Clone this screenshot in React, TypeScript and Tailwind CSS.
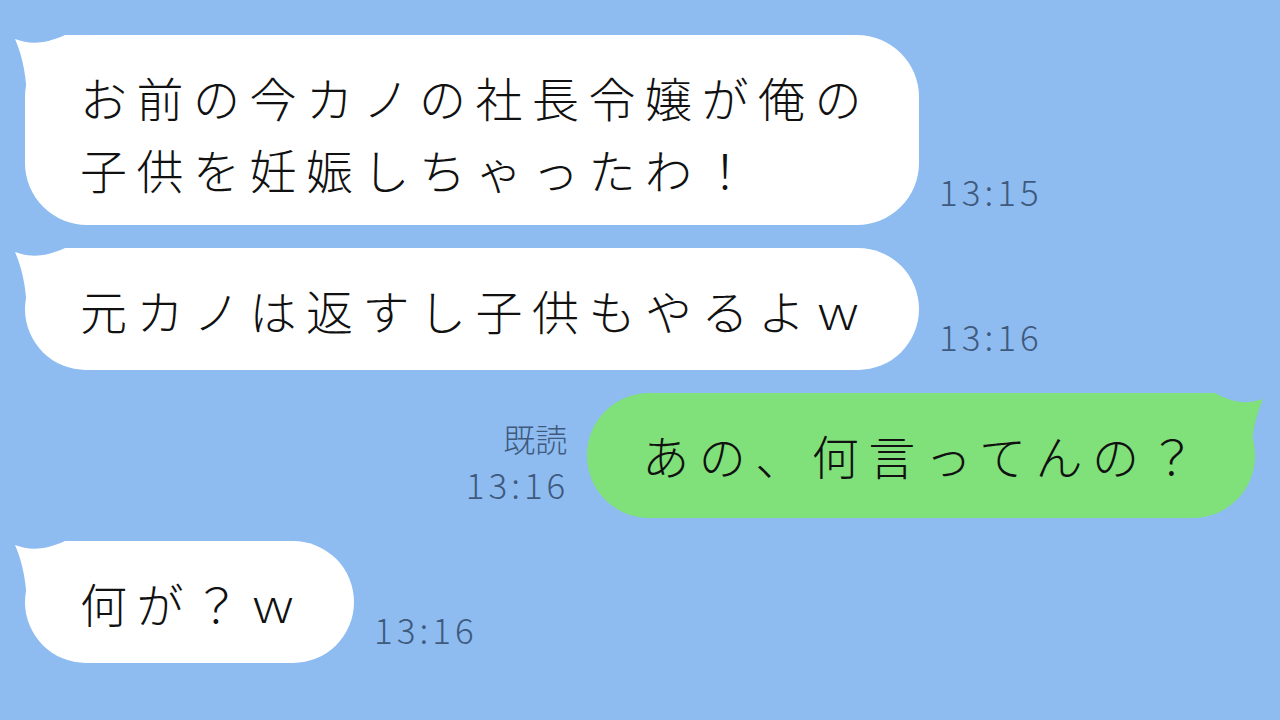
import React from "react";

const font = {
    fontFamily: '"Noto Sans CJK JP", "Noto Sans", sans-serif',
};

const TailLeft = () => (
    <svg className="absolute -left-[10px] top-0" width="70" height="70" viewBox="0 0 70 70">
        <path d="M0 4 C14 9 28 10 50 0 L70 0 L70 70 L12 70 C12 44 8 22 0 4 Z" fill="#ffffff" />
    </svg>
);

const TailRight = () => (
    <svg className="absolute -right-[8px] top-0" width="70" height="70" viewBox="0 0 70 70">
        <path d="M70 6 C56 11 42 11 22 0 L0 0 L0 70 L58 70 C58 44 62 24 70 6 Z" fill="#80e07a" />
    </svg>
);

const Time = ({ t }: { t: string }) => (
    <span className="block text-[35px] font-light leading-[36px] text-[#3f5a7c] tracking-[4px]">{t}</span>
);

const Incoming = ({ lines, time }: { lines: string[]; time: string }) => (
    <div className="flex items-end">
        <div className="relative">
            <TailLeft />
            <div
                className={
                    lines.length > 1
                        ? "relative rounded-[62px] bg-white pl-[55px] pr-[48px] pt-[26px] pb-[20px] text-[47px] font-light leading-[72px] tracking-[9.5px] text-[#111]"
                        : "relative rounded-[62px] bg-white pl-[55px] pr-[48px] pt-[26px] pb-[24px] text-[47px] font-light leading-[72px] tracking-[9.5px] text-[#111]"
                }
            >
                {lines.map((l, i) => (
                    <div key={i}>{l}</div>
                ))}
            </div>
        </div>
        <div className="ml-[20px] mb-[16px]">
            <Time t={time} />
        </div>
    </div>
);

export default function App() {
    return (
        <div className="w-[1280px] h-[720px] overflow-hidden bg-[#8ebcf1]" style={font}>
            <div className="flex flex-col gap-[23px] pl-[25px] pr-[25px] pt-[35px]">
                <Incoming
                    lines={["お前の今カノの社長令嬢が俺の", "子供を妊娠しちゃったわ！"]}
                    time="13:15"
                />
                <Incoming lines={["元カノは返すし子供もやるよｗ"]} time="13:16" />

                {/* Outgoing */}
                <div className="flex items-end justify-end">
                    <div className="mr-[18px] mb-[16px] flex flex-col items-end gap-[12px]">
                        <span className="block text-[32px] font-light leading-[32px] text-[#3f5a7c] pr-[2px]">既読</span>
                        <Time t="13:16" />
                    </div>
                    <div className="relative">
                        <TailRight />
                        <div className="relative rounded-[62px] bg-[#80e07a] pl-[55px] pr-[50px] pt-[26px] pb-[27px] text-[47px] font-light leading-[72px] tracking-[9.5px] text-[#111]">
                            あの、何言ってんの？
                        </div>
                    </div>
                </div>

                <Incoming lines={["何が？ｗ"]} time="13:16" />
            </div>
        </div>
    );
}
